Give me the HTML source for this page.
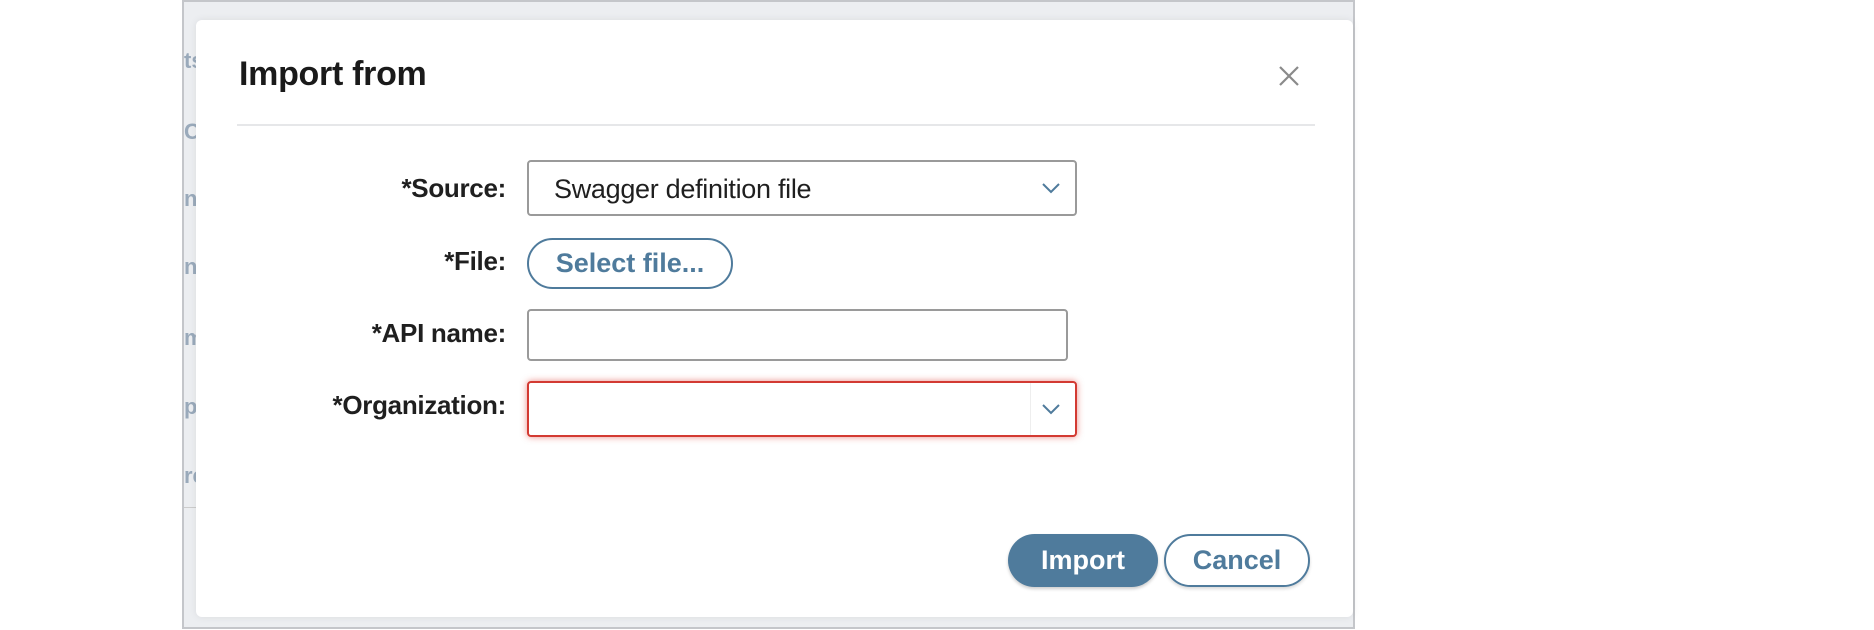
<!DOCTYPE html>
<html><head><meta charset="utf-8"><style>
*{box-sizing:border-box;margin:0;padding:0}
body{width:1874px;height:630px;background:#fff;position:relative;overflow:hidden;font-family:"Liberation Sans",sans-serif;color:#1f1f1f}
.frame{position:absolute;left:182px;top:0;width:1173px;height:629px;border:2px solid #c4c6ca;background:#eceef1}
.bg{position:absolute;left:184px;font-weight:bold;font-size:22px;color:#9aaabb}
.modal{position:absolute;left:196px;top:20px;width:1157px;height:597px;background:#fff;border-radius:6px;box-shadow:0 0 8px rgba(0,0,0,.08)}
.title{position:absolute;left:43px;top:35px;font-size:34px;font-weight:bold;color:#1a1a1a;letter-spacing:-0.3px}
.div{position:absolute;left:41px;top:104px;width:1078px;height:2px;background:#e6e7e9}
.lbl{position:absolute;font-size:26px;font-weight:bold;white-space:nowrap;text-align:right;width:310px;left:0;letter-spacing:-0.3px}
.box{position:absolute;border:2px solid #9a9a9a;border-radius:4px;background:#fff}
.btn{position:absolute;border-radius:27px;font-weight:bold;font-size:27px;display:flex;align-items:center;justify-content:center}
</style></head><body>
<div class="frame"></div>
<div class="bg" style="top:48px">ts</div>
<div class="bg" style="top:119px">C</div>
<div class="bg" style="top:186px">nb</div>
<div class="bg" style="top:254px">nb</div>
<div class="bg" style="top:325px">m</div>
<div class="bg" style="top:394px">pi</div>
<div class="bg" style="top:463px">re</div>
<div style="position:absolute;left:184px;top:507px;width:14px;height:1px;background:#ccc"></div>
<div class="modal">
<div class="title">Import from</div>
<svg style="position:absolute;left:1082px;top:45px" width="22" height="22" viewBox="0 0 22 22"><path d="M2 2L20 20M20 2L2 20" stroke="#8a8a8a" stroke-width="2.2"/></svg>
<div class="div"></div>
<div class="lbl" style="top:153px">*Source:</div>
<div class="box" style="left:331px;top:140px;width:550px;height:56px"><span style="position:absolute;left:25px;top:12px;font-size:27px;color:#1f1f1f;letter-spacing:-0.3px">Swagger definition file</span>
<svg style="position:absolute;right:14px;top:19px" width="20" height="14" viewBox="0 0 20 14"><path d="M2 3L10 11L18 3" stroke="#4f7b9c" stroke-width="2" fill="none"/></svg></div>
<div class="lbl" style="top:226px">*File:</div>
<div class="btn" style="left:331px;top:218px;width:206px;height:51px;border:2px solid #4f7b9c;color:#4f7b9c">Select file...</div>
<div class="lbl" style="top:298px">*API name:</div>
<div class="box" style="left:331px;top:289px;width:541px;height:52px"></div>
<div class="lbl" style="top:370px">*Organization:</div>
<div class="box" style="left:331px;top:361px;width:550px;height:56px;border-color:#d33a32;box-shadow:0 0 7px rgba(220,50,40,.55)">
<div style="position:absolute;right:44px;top:0;width:1px;height:52px;background:#eee"></div>
<svg style="position:absolute;right:14px;top:19px" width="20" height="14" viewBox="0 0 20 14"><path d="M2 3L10 11L18 3" stroke="#4f7b9c" stroke-width="2" fill="none"/></svg></div>
<div class="btn" style="left:812px;top:514px;width:150px;height:53px;background:#4f7b9c;color:#fff;box-shadow:0 2px 3px rgba(0,0,0,.2)">Import</div>
<div class="btn" style="left:968px;top:514px;width:146px;height:53px;border:2px solid #4f7b9c;color:#4f7b9c;box-shadow:0 2px 3px rgba(0,0,0,.15)">Cancel</div>
</div>
</body></html>
